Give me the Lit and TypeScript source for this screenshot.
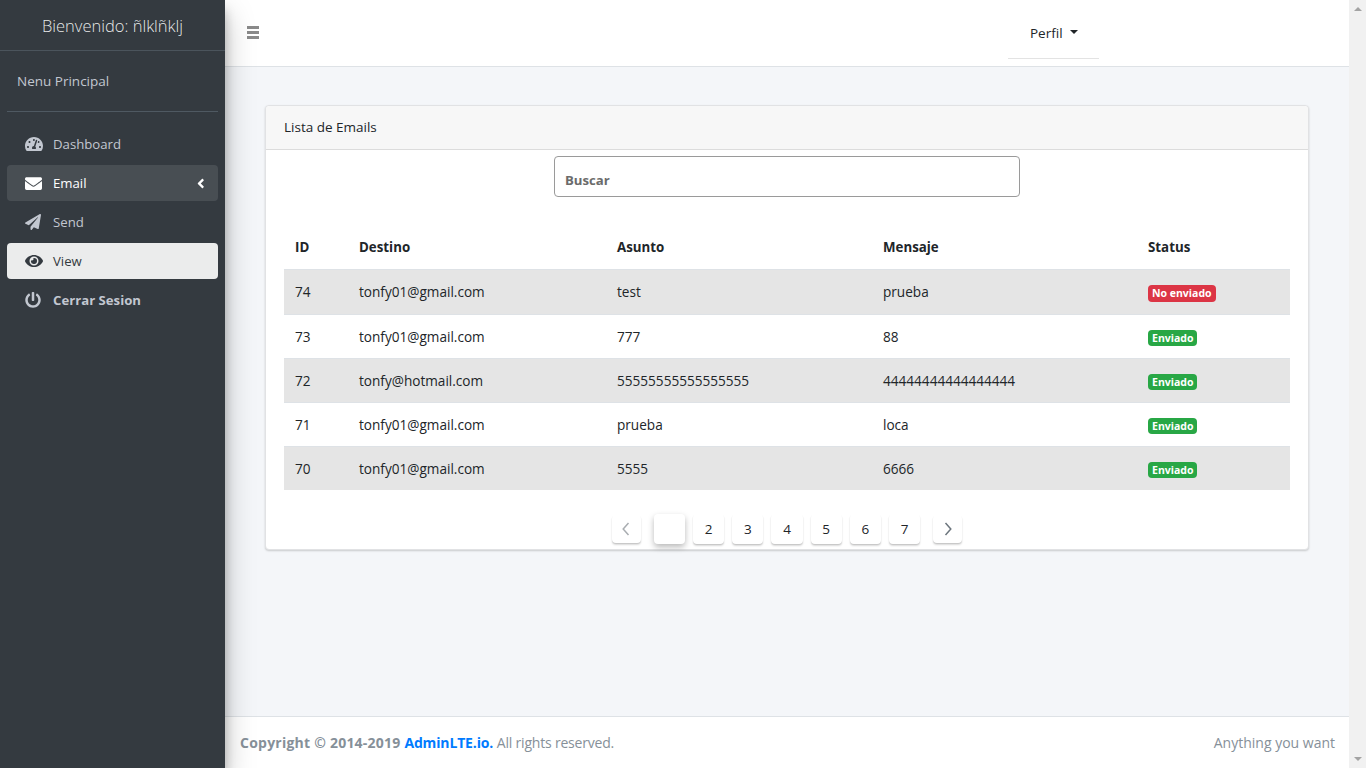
import { LitElement, html, css, svg } from "lit";
import { customElement } from "lit/decorators.js";

const ICONS: Record<string, [string, string]> = {
  gauge: ["0 0 576 512", "M288 32C128.94 32 0 160.94 0 320c0 52.8 14.25 102.26 39.06 144.8 5.61 9.62 16.3 15.2 27.44 15.2h443c11.14 0 21.83-5.58 27.44-15.2C561.75 422.26 576 372.8 576 320c0-159.06-128.94-288-288-288zm0 64c14.71 0 26.58 10.13 30.32 23.65-1.11 2.26-2.64 4.23-3.45 6.67l-9.22 27.67c-5.13 3.49-10.97 6.01-17.64 6.01-17.67 0-32-14.33-32-32S270.33 96 288 96zM96 384c-17.67 0-32-14.33-32-32s14.33-32 32-32 32 14.33 32 32-14.33 32-32 32zm48-160c-17.67 0-32-14.33-32-32s14.33-32 32-32 32 14.33 32 32-14.33 32-32 32zm246.77-72.41l-61.33 184C343.13 347.33 352 364.54 352 384c0 11.72-3.38 22.55-8.88 32H232.88c-5.5-9.45-8.88-20.28-8.88-32 0-33.94 26.5-61.43 59.9-63.59l61.34-184.01c4.17-12.56 17.73-19.45 30.36-15.17 12.57 4.19 19.35 17.77 15.17 30.36zm14.66 57.2l15.52-46.55c3.47-1.29 7.13-2.23 11.05-2.23 17.67 0 32 14.33 32 32s-14.33 32-32 32c-11.38-.01-20.89-6.28-26.57-15.22zM480 384c-17.67 0-32-14.33-32-32s14.33-32 32-32 32 14.33 32 32-14.33 32-32 32z"],
  envelope: ["0 0 512 512", "M502.3 190.8c3.9-3.1 9.7-.2 9.7 4.7V400c0 26.5-21.5 48-48 48H48c-26.5 0-48-21.5-48-48V195.6c0-5 5.7-7.8 9.7-4.7 22.4 17.4 52.1 39.5 154.1 113.6 21.1 15.4 56.7 47.8 92.2 47.6 35.7.3 72-32.8 92.3-47.6 102-74.1 131.6-96.3 154-113.7zM256 320c23.2.4 56.6-29.2 73.4-41.4 132.7-96.3 142.8-104.7 173.4-128.7 5.8-4.5 9.2-11.5 9.2-18.9v-19c0-26.5-21.5-48-48-48H48C21.5 64 0 85.5 0 112v19c0 7.4 3.4 14.3 9.2 18.9 30.6 23.9 40.7 32.4 173.4 128.7 16.8 12.2 50.2 41.8 73.4 41.4z"],
  plane: ["0 0 512 512", "M476 3.2L12.5 270.6c-18.1 10.4-15.8 35.6 2.2 43.2L121 358.4l287.3-253.2c5.5-4.9 13.3 2.6 8.6 8.3L176 407v80.5c0 23.6 28.5 32.9 42.5 15.8L282 426l124.6 52.2c14.2 6 30.4-2.9 33-18.2l72-432C515 7.8 493.3-6.8 476 3.2z"],
  eye: ["0 0 576 512", "M572.52 241.4C518.29 135.59 410.93 64 288 64S57.68 135.64 3.48 241.41a32.35 32.35 0 0 0 0 29.19C57.71 376.41 165.07 448 288 448s230.32-71.64 284.52-177.41a32.35 32.35 0 0 0 0-29.19zM288 400a144 144 0 1 1 144-144 143.93 143.93 0 0 1-144 144zm0-240a95.31 95.31 0 0 0-25.31 3.79 47.85 47.85 0 0 1-66.9 66.9A95.78 95.78 0 1 0 288 160z"],
  power: ["0 0 512 512", "M400 54.1c63 45 104 118.6 104 201.9 0 136.8-110.8 247.7-247.5 248C120 504.3 8.2 393 8 256.4 7.9 173.1 48.9 99.3 111.8 54.2c11.7-8.3 28-4.8 35 7.7L162.6 90c5.9 10.5 3.1 23.8-6.6 31-41.5 30.8-68 79.6-68 134.9-.1 92.3 74.5 168.1 168 168.1 91.6 0 168.6-74.2 168-169.1-.3-51.8-24.7-101.8-68.1-134-9.7-7.2-12.4-20.5-6.5-30.9l15.8-28.1c7-12.4 23.2-16.1 34.8-7.8zM296 264V24c0-13.3-10.7-24-24-24h-32c-13.3 0-24 10.7-24 24v240c0 13.3 10.7 24 24 24h32c13.3 0 24-10.7 24-24z"],
  angle: ["0 0 256 512", "M31.7 239l136-136c9.4-9.4 24.6-9.4 33.9 0l22.6 22.6c9.4 9.4 9.4 24.6 0 33.9L127.9 256l96.4 96.4c9.4 9.4 9.4 24.6 0 33.9L201.7 409c-9.4 9.4-24.6 9.4-33.9 0l-136-136c-9.5-9.4-9.5-24.6-.1-34z"],
  bars: ["0 0 12 13", "M0 0h12v3H0zM0 5h12v3H0zM0 10h12v3H0z"],
};

const icon = (name: string) => {
  const [vb, d] = ICONS[name];
  return html`<svg class="ic ic-${name}" viewBox=${vb} aria-hidden="true">${svg`<path fill="currentColor" d=${d}></path>`}</svg>`;
};

const NAV = [
  { label: "Dashboard", icon: "gauge", cls: "" },
  { label: "Email", icon: "envelope", cls: "open", arrow: true },
  { label: "Send", icon: "plane", cls: "" },
  { label: "View", icon: "eye", cls: "current" },
  { label: "Cerrar Sesion", icon: "power", cls: "strong" },
];

const ROWS = [
  ["74", "tonfy01@gmail.com", "test", "prueba", "No enviado"],
  ["73", "tonfy01@gmail.com", "777", "88", "Enviado"],
  ["72", "tonfy@hotmail.com", "55555555555555555", "44444444444444444", "Enviado"],
  ["71", "tonfy01@gmail.com", "prueba", "loca", "Enviado"],
  ["70", "tonfy01@gmail.com", "5555", "6666", "Enviado"],
];

@customElement("app-root")
export class AppRoot extends LitElement {
  static styles = css`
    :host {
      display: flex;
      width: 100%;
      height: 100vh;
      overflow: hidden;
      font-family: "Open Sans", "Noto Sans", "Liberation Sans", sans-serif;
      font-size: 13.5px;
      line-height: 21px;
      color: #212529;
      background: #f4f6f9;
    }
    .ic { display: block; height: 16px; width: auto; }
    .ic-envelope { height: 17px; }

    .sidebar {
      position: relative;
      z-index: 2;
      flex: 0 0 225px;
      background: #343a40;
      color: #c2c7d0;
      box-shadow: 0 14px 28px rgba(0,0,0,.25), 0 10px 10px rgba(0,0,0,.22);
    }
    .brand {
      height: 50px;
      display: flex;
      align-items: center;
      justify-content: center;
      border-bottom: 1px solid #4b545c;
      font-size: 16.5px;
      font-weight: 300;
      color: rgba(255,255,255,.9);
    }
    .panel {
      margin: 0 7px;
      padding: 20px 10px 19px;
      border-bottom: 1px solid #4f5962;
    }
    .nav {
      display: flex;
      flex-direction: column;
      gap: 3px;
      margin: 14px 7px 0;
    }
    .item {
      height: 36px;
      display: flex;
      align-items: center;
      padding: 0 14px 0 18px;
      border-radius: 4px;
      color: #c2c7d0;
      font-size: 13.2px;
    }
    .item .icb { flex: 0 0 28px; }
    .item .arrow { margin-left: auto; }
    .item .arrow .ic { height: 15px; }
    .item.open { background: rgba(255,255,255,.1); color: #fff; font-weight: 500; }
    .item.current { background: #ebecec; color: #343a40; }
    .item.strong { font-weight: 700; }

    .main {
      flex: 1;
      min-width: 0;
      display: flex;
      flex-direction: column;
    }
    .topbar {
      flex: 0 0 67px;
      box-sizing: border-box;
      display: flex;
      background: #fff;
      border-bottom: 1px solid #dee2e6;
      padding-left: 22px;
    }
    .toggle { color: #8a8a8a; padding-top: 26px; }
    .toggle .ic { height: 13px; }
    .profile {
      margin-left: 749px;
      width: 91px;
      height: 59px;
      box-sizing: border-box;
      border-bottom: 1px solid #e3e3e3;
      display: flex;
      align-items: center;
      padding: 8px 0 0 22px;
      color: #212529;
    }
    .caret {
      margin-left: 7px;
      margin-top: -3px;
      border-top: 4.5px solid #212529;
      border-left: 4.5px solid transparent;
      border-right: 4.5px solid transparent;
    }
    .content {
      flex: 1;
      padding: 38px 40px 0;
    }
    .card {
      background: #fff;
      border: 1px solid #e1e2e4;
      border-radius: 4px;
      box-shadow: 0 1px 2px rgba(0,0,0,.18);
      height: 445px;
      box-sizing: border-box;
      display: flex;
      flex-direction: column;
    }
    .card-head {
      flex: 0 0 44px;
      box-sizing: border-box;
      display: flex;
      align-items: center;
      padding: 0 18px;
      background: #f7f7f7;
      border-bottom: 1px solid #dcdcdc;
      border-radius: 4px 4px 0 0;
    }
    .search-row {
      display: flex;
      justify-content: center;
      padding-top: 6px;
    }
    .search {
      width: 466px;
      height: 41px;
      box-sizing: border-box;
      border: 1px solid #9a9a9a;
      border-radius: 4px;
      padding: 7px 10px 0;
      font: inherit;
      font-size: 13.2px;
      font-weight: 700;
      background: #fff;
      outline: none;
    }
    .search::placeholder { color: #6b6b6b; opacity: 1; font-weight: 700; }
    table {
      width: 1006px;
      margin: 29px 0 0 18px;
      border-collapse: collapse;
      table-layout: fixed;
      font-size: 13.6px;
    }
    th, td { box-sizing: border-box; padding: 11px; text-align: left; vertical-align: middle; }
    th { font-weight: 700; height: 43px; padding-bottom: 10px; padding-top: 11px; font-size: 13.3px; }
    td { border-top: 1px solid #dee2e6; height: 44px; }
    tbody tr:nth-child(odd) { background: #e5e5e5; }
    tbody tr:first-child td { height: 45px; }
    .c1 { width: 64px; } .c2 { width: 258px; } .c3 { width: 266px; } .c4 { width: 265px; }
    .badge {
      display: inline-block;
      padding: 0 4px;
      border-radius: 4px;
      font-size: 10.5px;
      line-height: 16px;
      font-weight: 700;
      color: #fff;
      vertical-align: middle;
      white-space: nowrap;
    }
    .badge.no { line-height: 17px; }
    .ok { background: #28a745; }
    .no { background: #dc3545; }
    .pager {
      display: flex;
      justify-content: center;
      align-items: center;
      gap: 8px;
      margin-top: 24px;
    }
    .pg {
      width: 31.2px;
      height: 30px;
      box-sizing: border-box;
      display: flex;
      align-items: center;
      justify-content: center;
      background: #fff;
      border-radius: 4px;
      box-shadow: 0 2px 2px rgba(0,0,0,.14), 0 1px 1px rgba(0,0,0,.1);
      color: #212529;
    }
    .pg.active { box-shadow: 0 3px 6px rgba(0,0,0,.28); }
    .pg.nav-pg { width: 29px; height: 28px; }
    .pg.prev { margin-right: 5px; color: #a9adb1; }
    .pg.next { margin-left: 5px; color: #6c757d; }
    .pg svg { width: 8px; height: 14px; display: block; }
    .footer {
      flex: 0 0 52px;
      box-sizing: border-box;
      display: flex;
      align-items: center;
      justify-content: space-between;
      background: #fff;
      border-top: 1px solid #dee2e6;
      padding: 0 14px 0 15px;
      color: #869099;
      font-size: 14px;
    }
    .footer b { font-weight: 700; letter-spacing: .23px; }
    .footer a { color: #007bff; font-weight: 700; text-decoration: none; letter-spacing: -.15px; }
    .footer .rest { letter-spacing: -.2px; }
    .scroll {
      flex: 0 0 17px;
      background: #f1f1f1;
      display: flex;
      flex-direction: column;
      justify-content: space-between;
      align-items: center;
      padding: 7px 0;
      box-sizing: border-box;
      position: relative;
      z-index: 3;
    }
    .tri { border-left: 4px solid transparent; border-right: 4px solid transparent; }
    .tri.up { border-bottom: 4px solid #a3a3a3; }
    .tri.down { border-top: 4px solid #a3a3a3; }
  `;

  render() {
    const chevron = (d: string) => html`<svg viewBox="0 0 8 14" aria-hidden="true">${svg`<path d=${d} fill="none" stroke="currentColor" stroke-width="1.5"></path>`}</svg>`;
    return html`
      <aside class="sidebar">
        <div class="brand">Bienvenido: ñlklñklj</div>
        <div class="panel">Nenu Principal</div>
        <nav class="nav">
          ${NAV.map((n) => html`
            <div class="item ${n.cls}">
              <span class="icb">${icon(n.icon)}</span>
              <span>${n.label}</span>
              ${n.arrow ? html`<span class="arrow">${icon("angle")}</span>` : ""}
            </div>`)}
        </nav>
      </aside>
      <div class="main">
        <header class="topbar">
          <div class="toggle">${icon("bars")}</div>
          <div class="profile">Perfil<span class="caret"></span></div>
        </header>
        <main class="content">
          <section class="card">
            <div class="card-head">Lista de Emails</div>
            <div class="search-row"><input class="search" placeholder="Buscar" /></div>
            <table>
              <thead>
                <tr>
                  <th class="c1">ID</th><th class="c2">Destino</th><th class="c3">Asunto</th><th class="c4">Mensaje</th><th>Status</th>
                </tr>
              </thead>
              <tbody>
                ${ROWS.map((r) => html`
                  <tr>
                    <td>${r[0]}</td><td>${r[1]}</td><td>${r[2]}</td><td>${r[3]}</td>
                    <td><span class="badge ${r[4] === "Enviado" ? "ok" : "no"}">${r[4]}</span></td>
                  </tr>`)}
              </tbody>
            </table>
            <div class="pager">
              <div class="pg nav-pg prev">${chevron("M6.5 1 L1.2 7 L6.5 13")}</div>
              <div class="pg active"></div>
              ${["2", "3", "4", "5", "6", "7"].map((p) => html`<div class="pg">${p}</div>`)}
              <div class="pg nav-pg next">${chevron("M1.5 1 L6.8 7 L1.5 13")}</div>
            </div>
          </section>
        </main>
        <footer class="footer">
          <span><b>Copyright © 2014-2019 <a>AdminLTE.io.</a></b> <span class="rest">All rights reserved.</span></span>
          <span>Anything you want</span>
        </footer>
      </div>
      <div class="scroll"><span class="tri up"></span><span class="tri down"></span></div>
    `;
  }
}
